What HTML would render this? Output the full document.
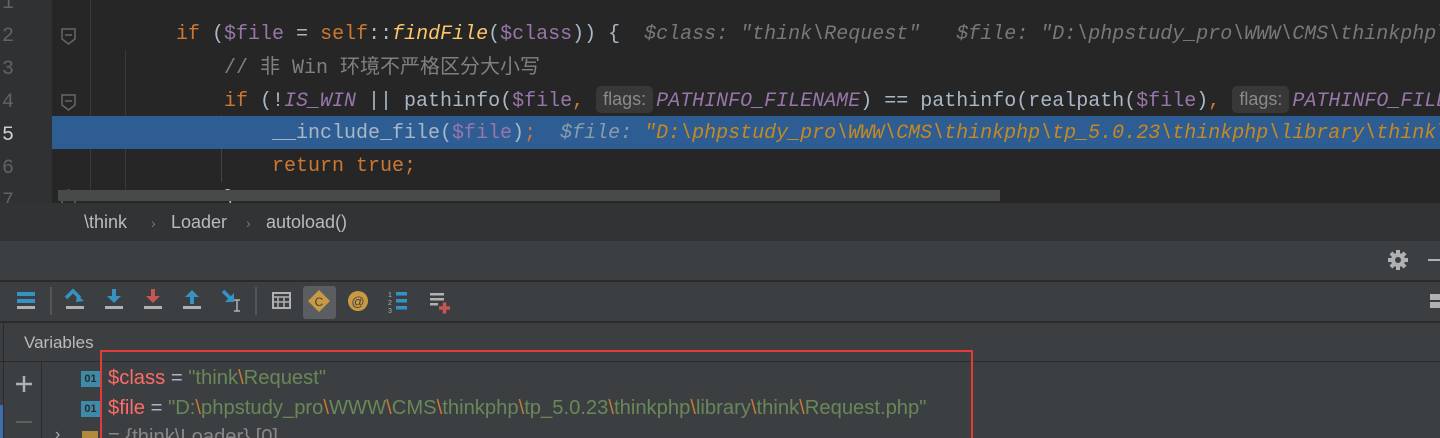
<!DOCTYPE html>
<html><head><meta charset="utf-8"><style>
*{margin:0;padding:0;box-sizing:border-box}
html,body{width:1440px;height:438px;overflow:hidden}
body{background:#3c3f41;position:relative;font-family:"Liberation Sans","Noto Sans CJK SC",sans-serif}
.ed{position:absolute;left:0;top:0;width:1440px;height:203px;background:#262626;overflow:hidden}
.gut{position:absolute;left:0;top:0;width:52px;height:203px;background:#2f3133}
.ln{position:absolute;left:0;font:20px "Liberation Mono",monospace;color:#606366;width:14px;text-align:right}
.code{position:absolute;white-space:pre;font:20px/33px "Liberation Mono","Noto Sans CJK SC",monospace;color:#a9b7c6}
.k{color:#cc7832}.v{color:#9876aa}.f{color:#ffc66d;font-style:italic}.c{color:#808080}
.h{color:#787878;font-style:italic}.ho{color:#c7891f;font-style:italic}
.it{color:#9876aa;font-style:italic}
.flag{display:inline-block;background:#383838;color:#8a8a8a;font:18px "Liberation Sans",sans-serif;border-radius:5px;padding:0 7px;margin-right:3px;line-height:27px;vertical-align:1px}
.guide{position:absolute;width:1px;background:#393939}
.bc{position:absolute;left:0;top:203px;width:1440px;height:38px;background:#313335;color:#bbbbbb;font-size:18px}
.sep{position:absolute;background:#2b2b2b;height:2px;left:0;width:1440px}
.var{position:absolute;font-size:20.2px;white-space:pre;color:#a9b7c6}
.r{color:#ff6b68}.g{color:#6a8759}.o{color:#cc7832}
.b01{position:absolute;left:81px;width:19px;height:16px;background:#3d8baa;color:#2a2a2a;font:bold 11px "Liberation Sans",sans-serif;text-align:center;line-height:16px}
.wrap{position:absolute;left:0;top:0;width:1440px;height:438px;overflow:hidden}
</style></head><body><div class="wrap">
<div class="ed">
 <div class="gut"></div>
 <div class="guide" style="left:125px;top:50px;height:150px"></div>
 <div class="guide" style="left:90px;top:0;height:200px"></div>
 <div class="guide" style="left:221px;top:115px;height:67px;background:#444"></div>
 <div style="position:absolute;left:52px;top:116px;width:1388px;height:33px;background:#2d5d93"></div>
 <div class="ln" style="top:-8px">1</div>
 <div class="ln" style="top:25px">2</div>
 <div class="ln" style="top:58px">3</div>
 <div class="ln" style="top:91px">4</div>
 <div class="ln" style="top:124px;color:#d0d0d0">5</div>
 <div class="ln" style="top:157px">6</div>
 <div class="ln" style="top:190px">7</div>
 <svg style="position:absolute;left:60px;top:27px" width="18" height="20"><path d="M2 2H15V12L8.5 17L2 12Z" fill="none" stroke="#666" stroke-width="1.5"/><path d="M5 8H12" stroke="#666" stroke-width="1.5"/></svg>
 <svg style="position:absolute;left:60px;top:93px" width="18" height="20"><path d="M2 2H15V12L8.5 17L2 12Z" fill="none" stroke="#666" stroke-width="1.5"/><path d="M5 8H12" stroke="#666" stroke-width="1.5"/></svg>
 <svg style="position:absolute;left:60px;top:188px" width="18" height="16"><path d="M2 15V7L8.5 2L15 7V15" fill="none" stroke="#666" stroke-width="1.5"/></svg>
 <div class="code" style="left:176px;top:18px"><span class="k">if</span> (<span class="v">$file</span> = <span class="k">self</span>::<span class="f">findFile</span>(<span class="v">$class</span>)) {  <span class="h">$class: "think\Request"   $file: "D:\phpstudy_pro\WWW\CMS\thinkphp\tp_5.0.23</span></div>
 <div class="code c" style="left:224px;top:52px">// 非 Win 环境不严格区分大小写</div>
 <div class="code" style="left:224px;top:85px"><span class="k">if</span> (!<span class="it">IS_WIN</span> || pathinfo(<span class="v">$file</span><span class="k">,</span> <span class="flag">flags:</span><span class="it">PATHINFO_FILENAME</span>) == pathinfo(realpath(<span class="v">$file</span>)<span class="k">,</span> <span class="flag">flags:</span><span class="it">PATHINFO_FILENAME</span></div>
 <div class="code" style="left:272px;top:117px">__include_file(<span class="v">$file</span>)<span class="k">;</span>  <span class="h" style="color:#8a9bb0">$file: </span><span class="ho">"D:\phpstudy_pro\WWW\CMS\thinkphp\tp_5.0.23\thinkphp\library\think\Request.php"</span></div>
 <div class="code" style="left:272px;top:150px"><span class="k">return true;</span></div>
 <div class="code" style="left:224px;top:183px">}</div>
 <div style="position:absolute;left:58px;top:190px;width:942px;height:11px;background:#484a4a"></div>
</div>
<div class="bc">
 <span style="position:absolute;left:84px;top:9px">\think</span>
 <span style="position:absolute;left:151px;top:12px;color:#777;font-size:14px">›</span>
 <span style="position:absolute;left:171px;top:9px">Loader</span>
 <span style="position:absolute;left:246px;top:12px;color:#777;font-size:14px">›</span>
 <span style="position:absolute;left:266px;top:9px">autoload()</span>
</div>
<svg style="position:absolute;left:1387px;top:249px" width="22" height="22" viewBox="0 0 22 22"><g fill="#afb1b3"><circle cx="11" cy="11" r="7"/><rect x="9" y="1" width="4" height="20"/><rect x="1" y="9" width="20" height="4"/><rect x="9" y="1" width="4" height="20" transform="rotate(45 11 11)"/><rect x="9" y="1" width="4" height="20" transform="rotate(-45 11 11)"/></g><circle cx="11" cy="11" r="3" fill="#3c3f41"/></svg>
<div style="position:absolute;left:1428px;top:259px;width:12px;height:2px;background:#afb1b3"></div>
<div class="sep" style="top:280px"></div>
<svg style="position:absolute;left:0;top:282px" width="460" height="40">
 <g fill="#3592c4"><rect x="17" y="10" width="18" height="4"/><rect x="17" y="17" width="18" height="4"/></g><rect x="17" y="24" width="18" height="3" fill="#afb1b3"/>
 <rect x="50" y="5" width="2" height="28" fill="#555"/>
 <path d="M66 16L73 9L80 16" fill="none" stroke="#3592c4" stroke-width="3.5"/><path d="M77 13L84 19L76 20Z" fill="#3592c4"/><rect x="66" y="24" width="18" height="3" fill="#afb1b3"/>
 <path d="M114 7V16" stroke="#3592c4" stroke-width="4"/><path d="M107 14L114 21L121 14Z" fill="#3592c4"/><rect x="105" y="24" width="18" height="3" fill="#afb1b3"/>
 <path d="M153 7V16" stroke="#c75450" stroke-width="4"/><path d="M146 14L153 21L160 14Z" fill="#c75450"/><rect x="144" y="24" width="18" height="3" fill="#afb1b3"/>
 <path d="M192 13V22" stroke="#3592c4" stroke-width="4"/><path d="M185 15L192 8L199 15Z" fill="#3592c4"/><rect x="183" y="24" width="18" height="3" fill="#afb1b3"/>
 <path d="M223 9L232 18" stroke="#3592c4" stroke-width="3.5"/><path d="M225 20H234V11Z" fill="#3592c4"/><path d="M237 18V29M234 18H240M234 29H240" stroke="#afb1b3" stroke-width="1.5"/>
 <rect x="255" y="5" width="2" height="28" fill="#555"/>
 <rect x="273" y="11" width="17" height="15" fill="none" stroke="#afb1b3" stroke-width="2"/><path d="M273 15H290M278 15V26M284 15V26M273 20H290" stroke="#afb1b3" stroke-width="1.5"/>
 <rect x="303" y="4" width="33" height="33" rx="3" fill="#5b5e61"/>
 <path d="M319 8L330 19L319 30L308 19Z" fill="#c99a43"/><text x="319" y="24" font-size="12" text-anchor="middle" fill="#3c3f41" font-family="Liberation Sans">C</text>
 <circle cx="358" cy="19" r="10" fill="#c99a43"/><text x="358" y="24" font-size="13" text-anchor="middle" fill="#3c3f41" font-family="Liberation Sans">@</text>
 <text x="388" y="15" font-size="7" fill="#afb1b3" font-family="Liberation Sans">1</text><text x="388" y="23" font-size="7" fill="#afb1b3" font-family="Liberation Sans">2</text><text x="388" y="31" font-size="7" fill="#afb1b3" font-family="Liberation Sans">3</text>
 <g fill="#3592c4"><rect x="396" y="10" width="11" height="3.5"/><rect x="396" y="17" width="11" height="3.5"/><rect x="396" y="24" width="11" height="3.5"/></g>
 <g fill="#afb1b3"><rect x="430" y="11" width="14" height="2.5"/><rect x="430" y="16" width="14" height="2.5"/><rect x="430" y="21" width="8" height="2.5"/></g>
 <path d="M439 26H450M444.5 20.5V31.5" stroke="#c75450" stroke-width="3.5"/>
</svg>
<div style="position:absolute;left:1430px;top:294px;width:10px;height:6px;background:#afb1b3"></div>
<div style="position:absolute;left:1430px;top:302px;width:10px;height:6px;background:#afb1b3"></div>
<div class="sep" style="top:321px"></div>
<div style="position:absolute;left:3px;top:323px;width:1px;height:115px;background:#2b2b2b"></div>
<div style="position:absolute;left:24px;top:333px;font-size:17px;color:#bbbbbb">Variables</div>
<div class="sep" style="top:361px;height:1px"></div>
<div style="position:absolute;left:41px;top:362px;width:1px;height:76px;background:#2b2b2b"></div>
<div style="position:absolute;left:0;top:405px;width:3px;height:33px;background:#3d6fb0"></div>
<svg style="position:absolute;left:14px;top:374px" width="20" height="20"><path d="M10 2V18M2 10H18" stroke="#afb1b3" stroke-width="2.5"/></svg>
<div style="position:absolute;left:16px;top:421px;width:16px;height:2px;background:#5e6060"></div>
<div class="b01" style="top:371px">01</div>
<div class="b01" style="top:401px">01</div>
<div style="position:absolute;left:55px;top:426px;color:#afb1b3;font-size:16px">›</div>
<div style="position:absolute;left:82px;top:431px;width:16px;height:7px;background:#b08a3a"></div>
<div class="var" style="left:108px;top:367px"><span class="r">$class</span> = <span class="g">"think<span class="o">\</span>Request"</span></div>
<div class="var" style="left:108px;top:397px"><span class="r">$file</span> = <span class="g">"D:<span class="o">\</span>phpstudy_pro<span class="o">\</span>WWW<span class="o">\</span>CMS<span class="o">\</span>thinkphp<span class="o">\</span>tp_5.0.23<span class="o">\</span>thinkphp<span class="o">\</span>library<span class="o">\</span>think<span class="o">\</span>Request.php"</span></div>
<div class="var" style="left:108px;top:426px;color:#888">= {think\Loader} [0]</div>
<div style="position:absolute;left:100px;top:350px;width:873px;height:90px;border:2px solid #e8393a"></div>
</div></body></html>
